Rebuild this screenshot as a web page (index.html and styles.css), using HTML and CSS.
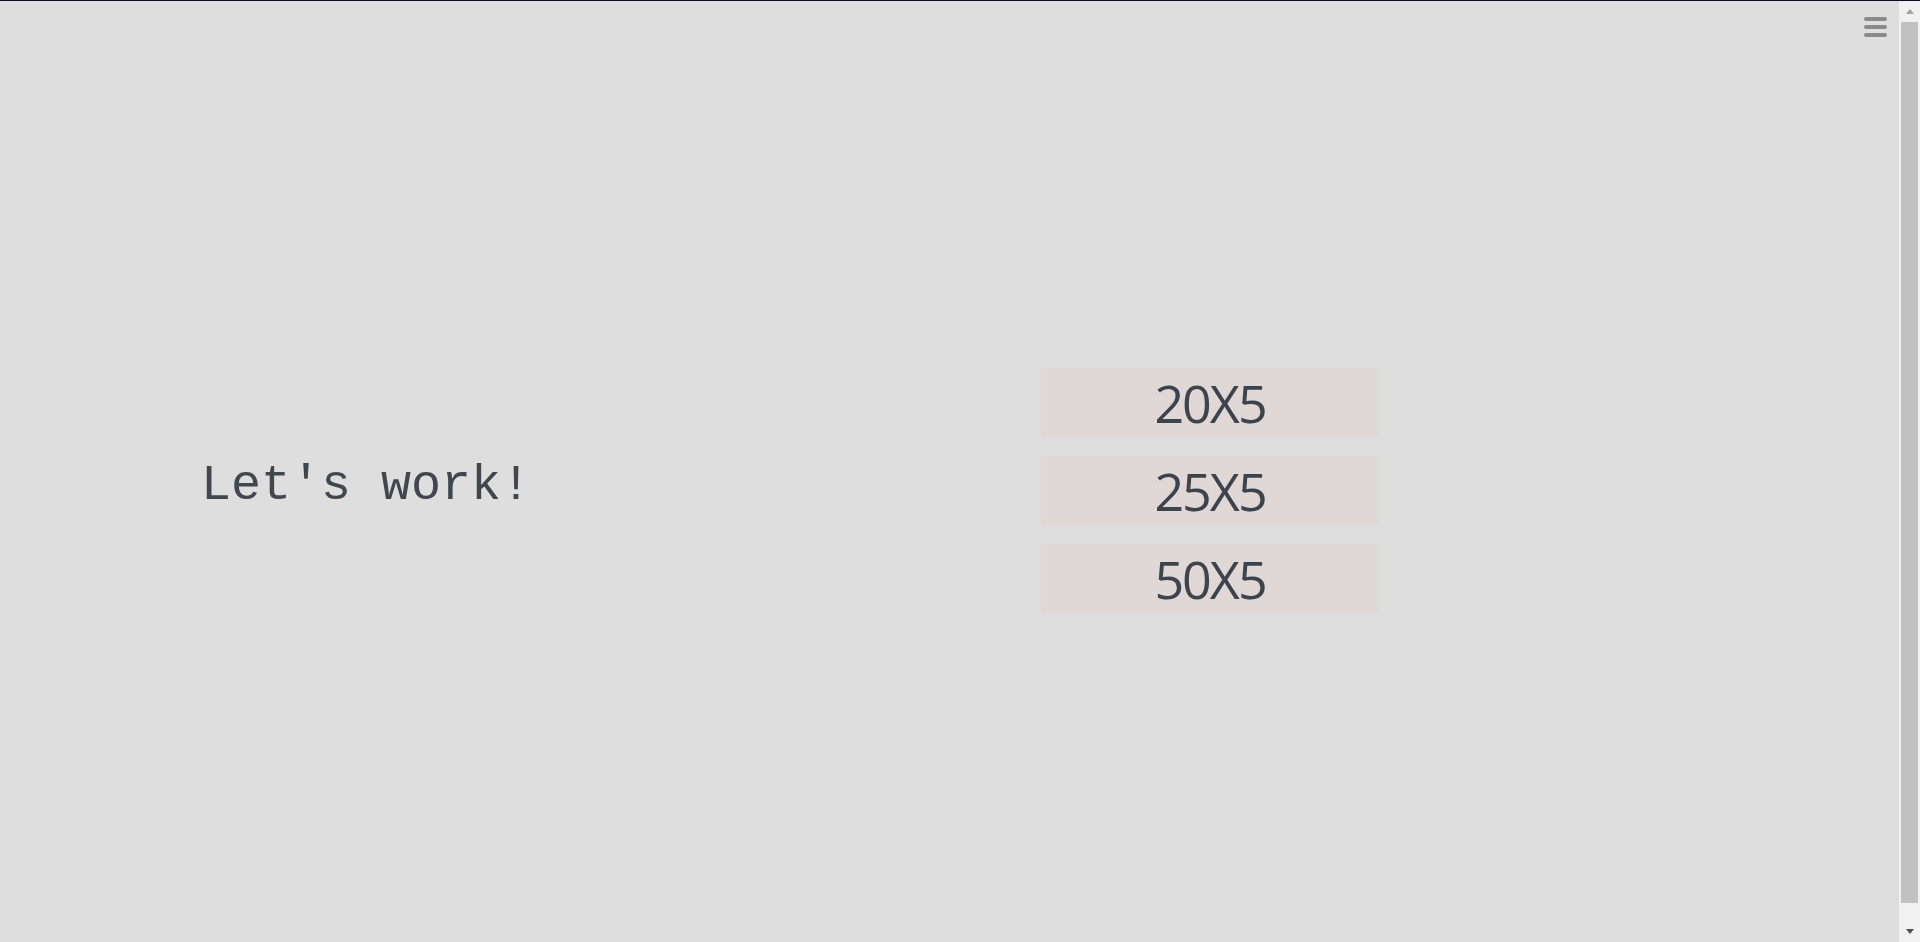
FILE: index.html
```html
<!DOCTYPE html>
<html lang="en">
<head>
<meta charset="utf-8">
<title>Let's work!</title>
<link rel="stylesheet" href="styles.css">
</head>
<body>
<button class="menu" aria-label="Menu">
  <span class="bar"></span>
  <span class="bar"></span>
  <span class="bar"></span>
</button>
<div class="scrollbar" aria-hidden="true">
  <span class="arrow arrow-up"></span>
  <span class="thumb"></span>
  <span class="arrow arrow-down"></span>
</div>
<main class="page">
  <section class="intro">
    <h1 class="title">Let's work!</h1>
  </section>
  <section class="options">
    <button class="option">20X5</button>
    <button class="option">25X5</button>
    <button class="option">50X5</button>
  </section>
</main>
</body>
</html>
```
FILE: styles.css
```css
html {
  background: #dedede;
}
body {
  margin: 0;
  border-top: 1px solid #0d0a2e;
  background: #dedede;
}
.page {
  display: flex;
  align-items: center;
  height: 980px;
}
.intro {
  flex: 0 0 1041px;
  box-sizing: border-box;
  padding-left: 201px;
  padding-bottom: 12px;
}
.title {
  margin: 0;
  font-family: "Liberation Mono", "Courier New", monospace;
  font-weight: normal;
  font-size: 50px;
  color: #41474e;
}
.options {
  display: flex;
  flex-direction: column;
  gap: 18px;
  width: 338px;
}
.option {
  height: 70px;
  border: none;
  padding: 0;
  background: #e0d7d7;
  color: #3e444b;
  font-family: "Open Sans", "Noto Sans", sans-serif;
  font-size: 52px;
  letter-spacing: -2px;
  line-height: 70px;
}
.menu {
  position: fixed;
  top: 17px;
  right: 33px;
  display: flex;
  flex-direction: column;
  gap: 4.5px;
  padding: 0;
  border: none;
  background: transparent;
}
.bar {
  display: block;
  width: 23px;
  height: 3.5px;
  border-radius: 2px;
  background: #8a8a8a;
}
.scrollbar {
  position: fixed;
  top: 1px;
  right: 0;
  bottom: 0;
  width: 21px;
  box-sizing: border-box;
  padding: 0 2px;
  display: flex;
  flex-direction: column;
  align-items: center;
  background: #f1f1f1;
}
.arrow {
  width: 0;
  height: 0;
  border-left: 4.5px solid transparent;
  border-right: 4.5px solid transparent;
}
.arrow-up {
  margin-top: 8px;
  border-bottom: 5px solid #a3a3a3;
}
.thumb {
  margin-top: 8px;
  width: 17px;
  height: 881px;
  background: #c1c1c1;
}
.arrow-down {
  margin-top: 26px;
  border-top: 5px solid #505050;
}
```
